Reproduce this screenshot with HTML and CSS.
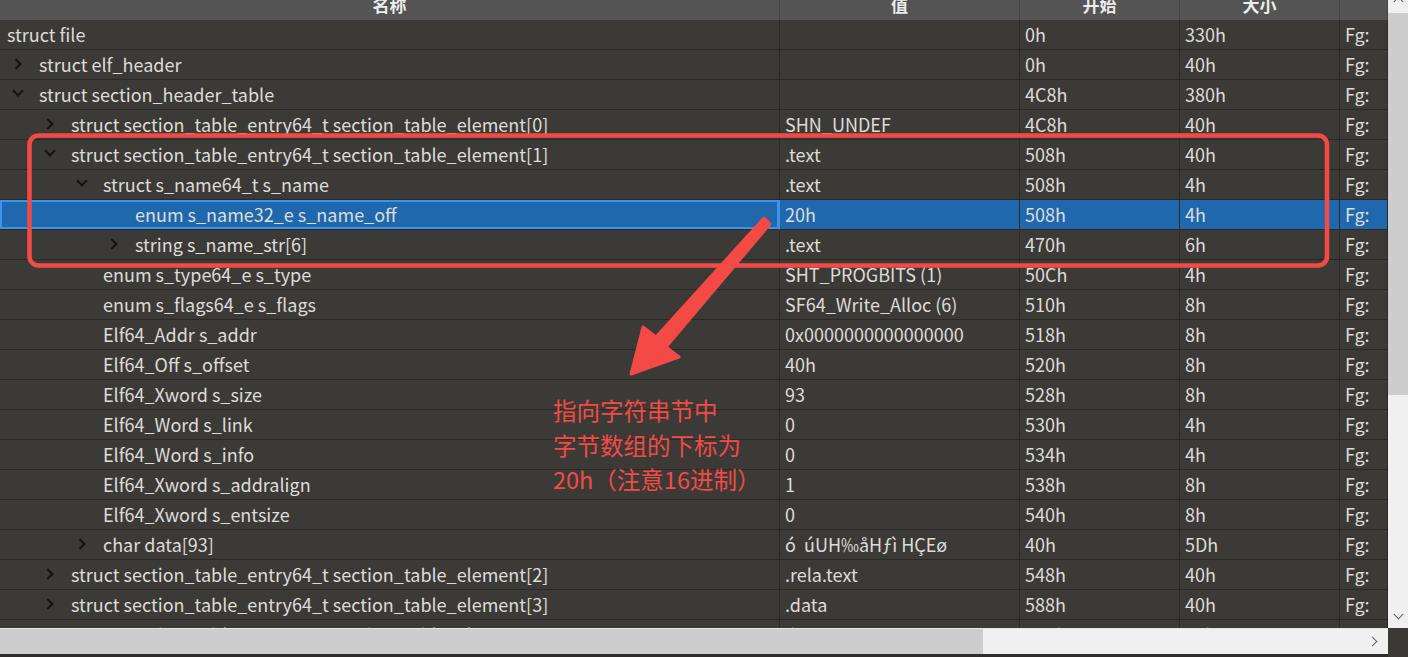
FILE: index.html
```html
<!DOCTYPE html>
<html lang="zh-CN">
<head>
  <meta charset="UTF-8">
  <title>模板结果 - ELF</title>
  <link rel="stylesheet" href="styles.css">
</head>
<body>
  <div class="window">
    <div class="viewport">
      <div class="tree">
        <div class="row head">
          <div class="cell">名称</div>
          <div class="cell">值</div>
          <div class="cell">开始</div>
          <div class="cell">大小</div>
          <div class="cell"></div>
        </div>

        <div class="row">
          <div class="cell name lv0"><span class="label">struct file</span></div>
          <div class="cell"></div><div class="cell">0h</div><div class="cell">330h</div><div class="cell">Fg:</div>
        </div>
        <div class="row">
          <div class="cell name lv1"><span class="twisty closed"></span><span class="label">struct elf_header</span></div>
          <div class="cell"></div><div class="cell">0h</div><div class="cell">40h</div><div class="cell">Fg:</div>
        </div>
        <div class="row">
          <div class="cell name lv1"><span class="twisty open"></span><span class="label">struct section_header_table</span></div>
          <div class="cell"></div><div class="cell">4C8h</div><div class="cell">380h</div><div class="cell">Fg:</div>
        </div>
        <div class="row">
          <div class="cell name lv2"><span class="twisty closed"></span><span class="label">struct section_table_entry64_t section_table_element[0]</span></div>
          <div class="cell">SHN_UNDEF</div><div class="cell">4C8h</div><div class="cell">40h</div><div class="cell">Fg:</div>
        </div>
        <div class="row">
          <div class="cell name lv2"><span class="twisty open"></span><span class="label">struct section_table_entry64_t section_table_element[1]</span></div>
          <div class="cell">.text</div><div class="cell">508h</div><div class="cell">40h</div><div class="cell">Fg:</div>
        </div>
        <div class="row">
          <div class="cell name lv3"><span class="twisty open"></span><span class="label">struct s_name64_t s_name</span></div>
          <div class="cell">.text</div><div class="cell">508h</div><div class="cell">4h</div><div class="cell">Fg:</div>
        </div>
        <div class="row selected">
          <div class="cell name lv4"><span class="twisty"></span><span class="label">enum s_name32_e s_name_off</span></div>
          <div class="cell">20h</div><div class="cell">508h</div><div class="cell">4h</div><div class="cell">Fg:</div>
        </div>
        <div class="row">
          <div class="cell name lv4"><span class="twisty closed"></span><span class="label">string s_name_str[6]</span></div>
          <div class="cell">.text</div><div class="cell">470h</div><div class="cell">6h</div><div class="cell">Fg:</div>
        </div>
        <div class="row">
          <div class="cell name lv3"><span class="twisty"></span><span class="label">enum s_type64_e s_type</span></div>
          <div class="cell">SHT_PROGBITS (1)</div><div class="cell">50Ch</div><div class="cell">4h</div><div class="cell">Fg:</div>
        </div>
        <div class="row">
          <div class="cell name lv3"><span class="twisty"></span><span class="label">enum s_flags64_e s_flags</span></div>
          <div class="cell">SF64_Write_Alloc (6)</div><div class="cell">510h</div><div class="cell">8h</div><div class="cell">Fg:</div>
        </div>
        <div class="row">
          <div class="cell name lv3"><span class="twisty"></span><span class="label">Elf64_Addr s_addr</span></div>
          <div class="cell">0x0000000000000000</div><div class="cell">518h</div><div class="cell">8h</div><div class="cell">Fg:</div>
        </div>
        <div class="row">
          <div class="cell name lv3"><span class="twisty"></span><span class="label">Elf64_Off s_offset</span></div>
          <div class="cell">40h</div><div class="cell">520h</div><div class="cell">8h</div><div class="cell">Fg:</div>
        </div>
        <div class="row">
          <div class="cell name lv3"><span class="twisty"></span><span class="label">Elf64_Xword s_size</span></div>
          <div class="cell">93</div><div class="cell">528h</div><div class="cell">8h</div><div class="cell">Fg:</div>
        </div>
        <div class="row">
          <div class="cell name lv3"><span class="twisty"></span><span class="label">Elf64_Word s_link</span></div>
          <div class="cell">0</div><div class="cell">530h</div><div class="cell">4h</div><div class="cell">Fg:</div>
        </div>
        <div class="row">
          <div class="cell name lv3"><span class="twisty"></span><span class="label">Elf64_Word s_info</span></div>
          <div class="cell">0</div><div class="cell">534h</div><div class="cell">4h</div><div class="cell">Fg:</div>
        </div>
        <div class="row">
          <div class="cell name lv3"><span class="twisty"></span><span class="label">Elf64_Xword s_addralign</span></div>
          <div class="cell">1</div><div class="cell">538h</div><div class="cell">8h</div><div class="cell">Fg:</div>
        </div>
        <div class="row">
          <div class="cell name lv3"><span class="twisty"></span><span class="label">Elf64_Xword s_entsize</span></div>
          <div class="cell">0</div><div class="cell">540h</div><div class="cell">8h</div><div class="cell">Fg:</div>
        </div>
        <div class="row">
          <div class="cell name lv3"><span class="twisty closed"></span><span class="label">char data[93]</span></div>
          <div class="cell">ó&nbsp;&nbsp;úUH‰åHƒì HÇEø</div><div class="cell">40h</div><div class="cell">5Dh</div><div class="cell">Fg:</div>
        </div>
        <div class="row">
          <div class="cell name lv2"><span class="twisty closed"></span><span class="label">struct section_table_entry64_t section_table_element[2]</span></div>
          <div class="cell">.rela.text</div><div class="cell">548h</div><div class="cell">40h</div><div class="cell">Fg:</div>
        </div>
        <div class="row">
          <div class="cell name lv2"><span class="twisty closed"></span><span class="label">struct section_table_entry64_t section_table_element[3]</span></div>
          <div class="cell">.data</div><div class="cell">588h</div><div class="cell">40h</div><div class="cell">Fg:</div>
        </div>
        <div class="row">
          <div class="cell name lv2"><span class="twisty closed"></span><span class="label">struct section_table_entry64_t section_table_element[4]</span></div>
          <div class="cell">.bss</div><div class="cell">5C8h</div><div class="cell">40h</div><div class="cell">Fg:</div>
        </div>
      </div>

      <!-- annotation drawn on top of the screenshot -->
      <svg class="markup" width="1388" height="628" viewBox="0 0 1388 628">
        <rect x="29.5" y="135.5" width="1297.5" height="130" rx="9" ry="9" fill="none" stroke="#f44a46" stroke-width="4.5"/>
        <polygon points="764,218 770,224 666,347 679,357 631,374 643,327 656,337" fill="#f44a46" stroke="#f44a46" stroke-width="3" stroke-linejoin="round"/>
      </svg>
      <div class="note">指向字符串节中<br>字节数组的下标为<br>20h（注意16进制）</div>
    </div>

    <div class="vscroll">
      <span class="arrow up"></span>
      <div class="thumb"></div>
      <div class="track"></div>
      <span class="arrow down"></span>
    </div>

    <div class="hscroll">
      <div class="bar">
        <div class="thumb"></div>
        <div class="track"><span class="arrow right"></span></div>
      </div>
    </div>
    <div class="corner"></div>
  </div>
</body>
</html>
```

FILE: styles.css
```css
*, *::before, *::after {
  box-sizing: border-box;
}

:root {
  --row-bg: #3c3a36;
  --grid-line: #2a2926;
  --head-bg: #545454;
  --text-color: #dcdcda;
  --sel-bg: #2068ad;
  --sel-focus: #3d93e8;
  --mark-red: #f44a46;
  --scroll-track: #f0f0f0;
  --scroll-thumb: #cdcdcd;
}

html, body {
  margin: 0;
  height: 100%;
  overflow: hidden;
  background-color: var(--row-bg);
}

body {
  font-family: "Noto Sans CJK SC", "Noto Sans", sans-serif;
  font-size: 18px;
  color: var(--text-color);
}

.window {
  display: grid;
  grid-template-columns: 1388px 20px;
  grid-template-rows: 628px 29px;
  width: 1408px;
  height: 657px;
}

.viewport {
  position: relative;
  overflow: hidden;
  background-color: var(--row-bg);
}

.tree {
  margin-top: -12px;
}

.row {
  display: grid;
  grid-template-columns: 780px 240px 160px 160px 48px;
  height: 30px;
}

.cell {
  display: flex;
  align-items: center;
  padding-left: 5px;
  padding-bottom: 2px;
  border-right: 1px solid var(--grid-line);
  border-bottom: 1px solid var(--grid-line);
  white-space: nowrap;
  overflow: hidden;
  line-height: 1;
}

.row.head {
  height: 32px;
  background-color: var(--head-bg);
}

.row.head .cell {
  justify-content: center;
  padding-left: 0;
  padding-bottom: 0;
  font-size: 17px;
  font-weight: 700;
  color: #ececec;
  border-bottom: none;
  border-right-color: #444;
}

.name.lv0 { padding-left: 7px; }
.name.lv1 { padding-left: 39px; }
.name.lv2 { padding-left: 71px; }
.name.lv3 { padding-left: 103px; }
.name.lv4 { padding-left: 135px; }

.lv0 .twisty { display: none; }

.twisty {
  flex: none;
  width: 12px;
  height: 12px;
  margin-left: -27px;
  margin-right: 15px;
  position: relative;
}

.twisty.closed::before,
.twisty.open::before {
  content: "";
  position: absolute;
  width: 8px;
  height: 8px;
  border-right: 2.5px solid #141414;
  border-bottom: 2.5px solid #141414;
}

.twisty.closed::before {
  left: 0;
  top: 2px;
  transform: rotate(-45deg);
}

.twisty.open::before {
  left: 2px;
  top: -1px;
  transform: rotate(45deg);
}

.row.selected {
  background-color: var(--sel-bg);
}

.row.selected .name {
  box-shadow: inset 0 0 0 2px var(--sel-focus);
  border-right-color: var(--sel-focus);
}

.markup {
  position: absolute;
  left: 0;
  top: 0;
  pointer-events: none;
}

.note {
  position: absolute;
  left: 553px;
  top: 393px;
  font-size: 23.5px;
  line-height: 34.5px;
  color: var(--mark-red);
  white-space: nowrap;
}

.vscroll {
  display: flex;
  flex-direction: column;
  background-color: var(--scroll-track);
}

.vscroll .thumb {
  height: 382px;
  margin-top: 8px;
  background-color: var(--scroll-thumb);
}

.vscroll .track {
  flex: 1;
}

.arrow {
  display: block;
  width: 7px;
  height: 7px;
  border-right: 1.5px solid #606060;
  border-bottom: 1.5px solid #606060;
}

.arrow.up {
  margin: -2px auto 0;
  transform: rotate(-135deg);
}

.arrow.down {
  margin: 0 auto 10px;
  transform: rotate(45deg);
}

.hscroll {
  background-color: #2e2d2b;
}

.hscroll .bar {
  display: flex;
  height: 26px;
  border-top: 1px solid #e6e6e6;
}

.hscroll .thumb {
  width: 983px;
  background-color: var(--scroll-thumb);
}

.hscroll .track {
  flex: 1;
  display: flex;
  align-items: center;
  justify-content: flex-end;
  padding-right: 12px;
  background-color: var(--scroll-track);
}

.arrow.right {
  transform: rotate(-45deg);
}

.corner {
  background-color: #3a3936;
}
```
